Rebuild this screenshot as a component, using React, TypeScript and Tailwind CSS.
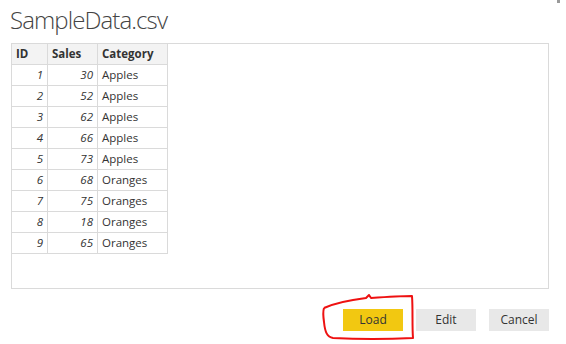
import React from "react";

const rows: [number, number, string][] = [
  [1, 30, "Apples"],
  [2, 52, "Apples"],
  [3, 62, "Apples"],
  [4, 66, "Apples"],
  [5, 73, "Apples"],
  [6, 68, "Oranges"],
  [7, 75, "Oranges"],
  [8, 18, "Oranges"],
  [9, 65, "Oranges"],
];

export default function App() {
  return (
    <div
      className="relative w-[566px] h-[344px] bg-white overflow-hidden text-[#333]"
      style={{ fontFamily: '"Open Sans", "Noto Sans", sans-serif' }}
    >
      <div className="absolute right-[6px] top-0 w-[3px] h-[3px] bg-[#9a9a9a]" />
      <div className="pl-[10px] pt-[3px] h-[43px] text-[24px] font-light leading-[34px] tracking-[-0.9px] text-[#444]">
        SampleData.csv
      </div>
      <div className="ml-[11px] w-[538px] h-[246px] border border-[#dadada]">
        <div className="grid grid-cols-[36px_50px_70px] w-[156px] text-[11.5px]">
          <div className="h-[21px] bg-[#f3f3f3] border-r border-b border-[#dadada] pl-[4px] font-bold leading-[20px]">
            ID
          </div>
          <div className="h-[21px] bg-[#f3f3f3] border-r border-b border-[#dadada] pl-[4px] font-bold leading-[20px]">
            Sales
          </div>
          <div className="h-[21px] bg-[#f3f3f3] border-r border-b border-[#dadada] pl-[4px] font-bold leading-[20px]">
            Category
          </div>
          {rows.map(([id, sales, cat]) => (
            <React.Fragment key={id}>
              <div className="h-[21px] border-r border-b border-[#dadada] pr-[4px] text-right italic leading-[20px]">
                {id}
              </div>
              <div className="h-[21px] border-r border-b border-[#dadada] pr-[4px] text-right italic leading-[20px]">
                {sales}
              </div>
              <div className="h-[21px] border-r border-b border-[#dadada] pl-[4px] leading-[20px]">
                {cat}
              </div>
            </React.Fragment>
          ))}
        </div>
      </div>
      <div className="flex justify-end gap-[13px] pr-[17px] mt-[20px] text-[12px]">
        <button className="w-[60px] h-[22px] bg-[#f2c811] text-[#333]">Load</button>
        <button className="w-[60px] h-[22px] bg-[#e8e8e8] text-[#333]">Edit</button>
        <button className="w-[60px] h-[22px] bg-[#e8e8e8] text-[#333]">Cancel</button>
      </div>
      <svg
        className="absolute left-0 top-0 pointer-events-none"
        width="566"
        height="344"
        viewBox="0 0 566 344"
      >
        <path
          d="M324 308 C 335 303, 350 300, 366 298 L 369 295 L 371 298 C 385 297, 400 296, 412 296 C 413 310, 412 325, 413 338 C 390 339, 355 339, 333 338 C 327 337, 325 332, 324 322 C 323 315, 323 311, 324 308"
          fill="none"
          stroke="#ee1111"
          strokeWidth="2"
          strokeLinejoin="round"
        />
      </svg>
    </div>
  );
}
